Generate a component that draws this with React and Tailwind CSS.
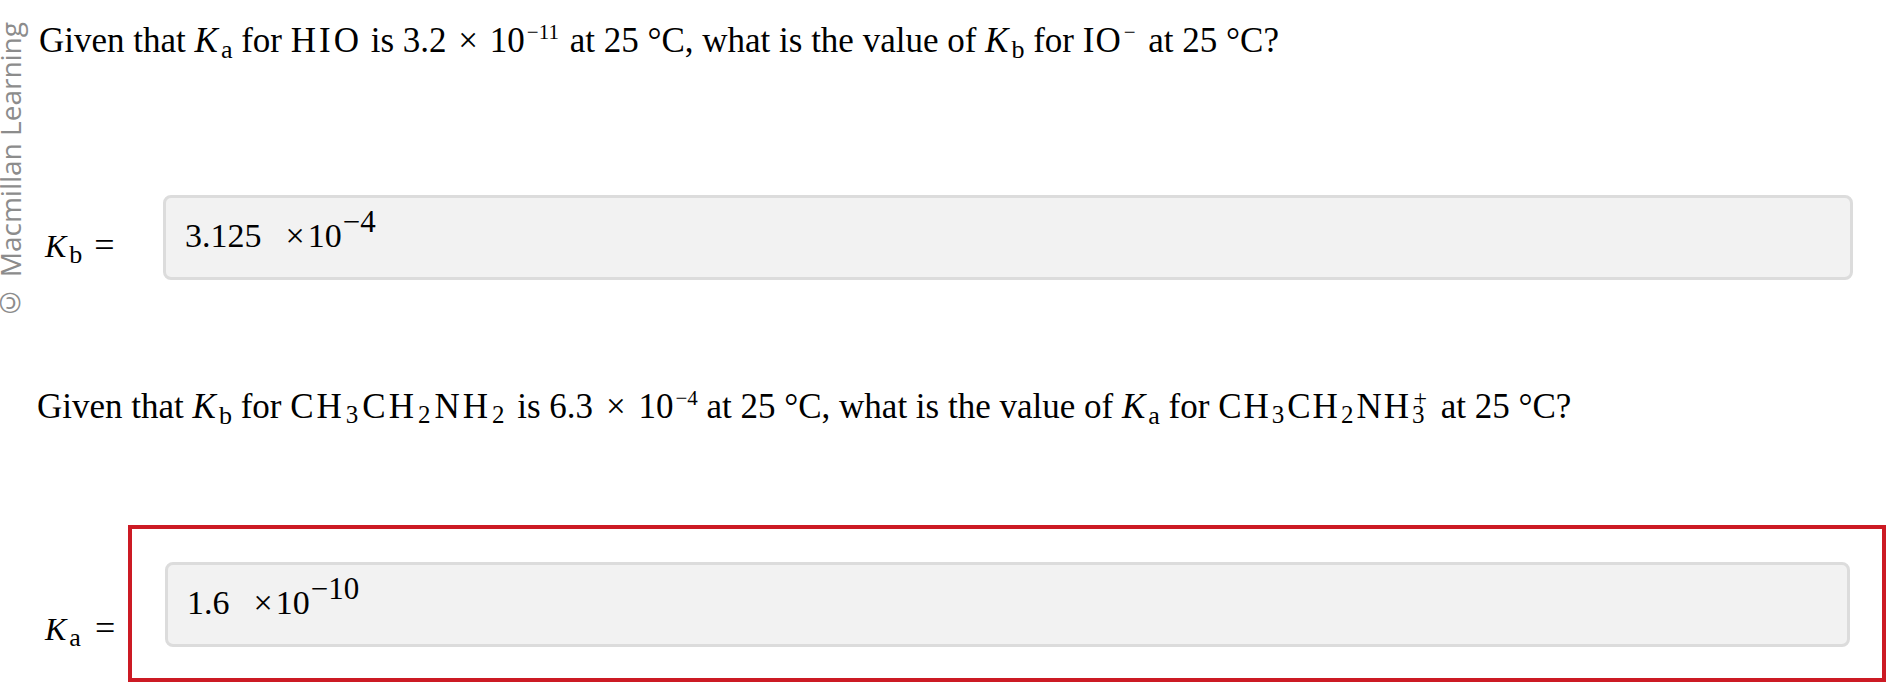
// italic K with an upright subscript, spaced like the math renderer does
const K = ({ sub }) => (
  <span className="whitespace-nowrap">
    <i>K</i>
    <sub className="text-[26px] bottom-[-6px] ml-[3px]">{sub}</sub>
  </span>
);

const Sb = ({ children }) => <sub className="text-[25px] bottom-[-5px] ml-[1px] mr-[1px]">{children}</sub>;

const Sp = ({ children, extra = '' }) => <sup className={`text-[21px] top-[-13px] ml-[2px] ${extra}`}>{children}</sup>;

const Chem = ({ children, track = 'tracking-[3px]' }) => (
  <span className={`${track} whitespace-nowrap`}>{children}</span>
);

const AnswerBox = ({ base, exp }) => (
  <div className="h-[85px] rounded-[8px] border-[3px] border-[#dcdcdc] bg-[#f2f2f2] pl-[19px] pt-[18px] text-[34px] leading-[40px] text-black whitespace-nowrap">
    {base}
    <span className="ml-[24px]">×</span>
    <span className="ml-[3px]">10</span>
    <sup className="text-[31px] top-[-15px] ml-[1px]">−{exp}</sup>
  </div>
);

export default function App() {
  return (
    <div className="relative w-[1886px] h-[698px] overflow-hidden bg-white font-['Liberation_Serif',serif] text-black">
      {/* watermark */}
      <div className="absolute left-[-4px] top-[22px] rotate-180 [writing-mode:vertical-rl] font-['Open_Sans',sans-serif] text-[28px] leading-none text-[#8c8c8c] whitespace-nowrap">
        © Macmillan Learning
      </div>

      <div className="pt-[21px]">
        <p className="pl-[39px] text-[35px] leading-[40px] whitespace-nowrap">
          Given that <K sub="a" /> for <Chem>HIO</Chem> is 3.2
          <span className="mx-[3px]"> × </span>10<Sp extra="mr-[2px]">−11</Sp>{' '}
          at 25 °C, what is the value of <K sub="b" /> for <Chem track="tracking-[1px]">IO</Chem>
          <Sp extra="mr-[4px]">−</Sp>{' '}
          at 25 °C?
        </p>

        <div className="mt-[134px] flex">
          <div className="w-[163px] shrink-0 pl-[45px] pt-[30px] text-[32px] leading-[40px] whitespace-nowrap">
            <K sub="b" />
            <span className="ml-[12px] text-[36px]">=</span>
          </div>
          <div className="flex-1 mr-[33px]">
            <AnswerBox base="3.125" exp="4" />
          </div>
        </div>

        <p className="mt-[107px] pl-[37px] text-[35px] leading-[40px] whitespace-nowrap">
          Given that <K sub="b" /> for <Chem>CH<Sb>3</Sb>CH<Sb>2</Sb>NH<Sb>2</Sb></Chem> is 6.3
          <span className="mx-[4px]"> × </span>10<Sp>−4</Sp>{' '}
          at 25 °C, what is the value of <K sub="a" /> for{' '}
          <Chem track="tracking-[2px]">
            CH<Sb>3</Sb>CH<Sb>2</Sb>NH<Sb>3</Sb>
            <sup className="text-[24px] top-[-12px] ml-[-14px] mr-[3px]">+</sup>
          </Chem>{' '}
          at 25 °C?
        </p>

        <div className="mt-[98px] flex">
          <div className="w-[128px] shrink-0 pl-[45px] pt-[83px] text-[32px] leading-[40px] whitespace-nowrap">
            <K sub="a" />
            <span className="ml-[14px] text-[36px]">=</span>
          </div>
          <div className="flex-1 border-4 border-[#cc1a24] pl-[33px] pr-[32px] pt-[33px] pb-[31px]">
            <AnswerBox base="1.6" exp="10" />
          </div>
        </div>
      </div>
    </div>
  );
}
